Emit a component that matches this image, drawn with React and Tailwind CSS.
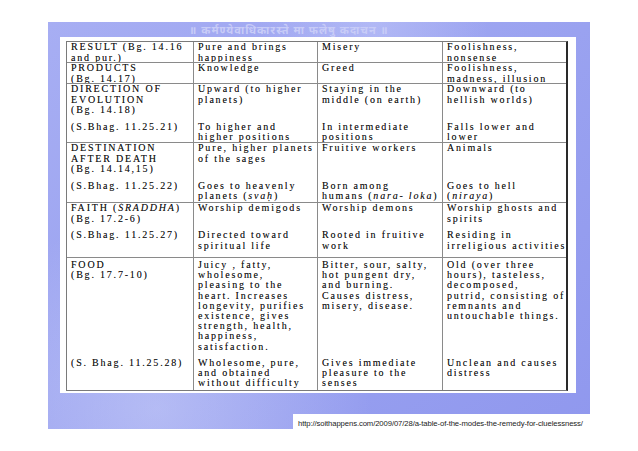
import React from 'react';

const I = ({ children }) => <span className="italic">{children}</span>;

const rows = [
  {
    h: 'h-[21px]',
    cells: [
      ['RESULT (Bg. 14.16', 'and pur.)'],
      ['Pure and brings', 'happiness'],
      ['Misery'],
      ['Foolishness,', 'nonsense'],
    ],
  },
  {
    h: 'h-[21px]',
    cells: [
      ['PRODUCTS', '(Bg. 14.17)'],
      ['Knowledge'],
      ['Greed'],
      ['Foolishness,', 'madness, illusion'],
    ],
  },
  {
    h: 'h-[59px]',
    cells: [
      ['DIRECTION OF', 'EVOLUTION', '(Bg. 14.18)', null, '(S.Bhag. 11.25.21)'],
      ['Upward (to higher', 'planets)', '', null, 'To higher and', 'higher positions'],
      ['Staying in the', 'middle (on earth)', '', null, 'In intermediate', 'positions'],
      ['Downward (to', 'hellish worlds)', '', null, 'Falls lower and', 'lower'],
    ],
  },
  {
    h: 'h-[60px]',
    cells: [
      ['DESTINATION', 'AFTER DEATH', '(Bg. 14.14,15)', null, '(S.Bhag. 11.25.22)'],
      ['Pure, higher planets', 'of the sages', '', null, 'Goes to heavenly', <>planets (<I>svaḥ</I>)</>],
      ['Fruitive workers', '', '', null, 'Born among', <>humans (<I>nara- loka</I>)</>],
      ['Animals', '', '', null, 'Goes to hell', <>(<I>niraya</I>)</>],
    ],
  },
  {
    h: 'h-[55px]',
    cells: [
      [<>FAITH (<I>ŚRADDHĀ</I>)</>, '(Bg. 17.2-6)', null, '(S.Bhag. 11.25.27)'],
      ['Worship demigods', '', null, 'Directed toward', 'spiritual life'],
      ['Worship demons', '', null, 'Rooted in fruitive', 'work'],
      ['Worship ghosts and', 'spirits', null, 'Residing in', 'irreligious activities'],
    ],
  },
  {
    h: 'h-[132px]',
    food: true,
    cells: [
      ['FOOD', '(Bg. 17.7-10)', '', '', '', '', '', '', '', null, '(S. Bhag. 11.25.28)'],
      [
        'Juicy , fatty,',
        'wholesome,',
        'pleasing to the',
        'heart. Increases',
        'longevity, purifies',
        'existence, gives',
        'strength, health,',
        'happiness,',
        'satisfaction.',
        null,
        'Wholesome, pure,',
        'and obtained',
        'without difficulty',
      ],
      [
        'Bitter, sour, salty,',
        'hot pungent dry,',
        'and burning.',
        'Causes distress,',
        'misery, disease.',
        '',
        '',
        '',
        '',
        null,
        'Gives immediate',
        'pleasure to the',
        'senses',
      ],
      [
        'Old (over three',
        'hours), tasteless,',
        'decomposed,',
        'putrid, consisting of',
        'remnants and',
        'untouchable things.',
        '',
        '',
        '',
        null,
        'Unclean and causes',
        'distress',
      ],
    ],
  },
];

const Cell = ({ lines, last, food }) => (
  <div className={`pl-[4px] overflow-hidden ${food ? 'pt-[2px]' : ''} ${last ? '' : 'border-r border-[#8a8a8a]'}`}>
    {lines.map((l, i) =>
      l === null ? (
        <div key={i} className="h-[6px]" />
      ) : (
        <div
          key={i}
          className={`whitespace-nowrap ${food ? 'h-[10.2px] leading-[10.2px]' : 'h-[10.5px] leading-[10.5px]'}`}
        >
          {l}
        </div>
      )
    )}
  </div>
);

export default function App() {
  return (
    <div className="w-[638px] h-[451px] bg-white relative overflow-hidden">
      <div className="ml-[48px] mt-[22px] w-[542px] h-[407px] bg-gradient-to-br from-[#a7aef3] via-[#9aa2f0] to-[#9098ee] relative">
        <div className="absolute inset-0 bg-[radial-gradient(ellipse_at_20%_95%,rgba(215,220,250,0.45),transparent_35%)]" />
        <div className="absolute inset-0 bg-[radial-gradient(ellipse_at_60%_0%,rgba(200,206,250,0.45),transparent_25%)]" />
        <div className="relative h-[15px] flex items-center justify-center pr-[60px]">
          <span className="text-[11px] leading-none text-[#c8ccf7] font-bold tracking-[1px] font-['Noto_Sans','DejaVu_Sans',sans-serif]">
            ॥ कर्मण्येवाधिकारस्ते मा फलेषु कदाचन ॥
          </span>
        </div>
        <div className="relative ml-[12px] w-[516px] h-[356px] bg-white pt-[4px] pl-[6px]">
          <div className="w-[502px] border-t border-l border-b border-[#7a7a7a] border-r-2 border-r-[#2a2a2a] text-[10px] text-[#151515] tracking-[1.8px] [text-shadow:0_0_0.4px_rgba(0,0,0,0.45)] font-['Liberation_Serif','Times_New_Roman',serif]">
            {rows.map((r, ri) => (
              <div
                key={ri}
                className={`grid grid-cols-[127px_124px_125px_124px] ${r.h} ${ri < rows.length - 1 ? 'border-b border-[#8a8a8a]' : ''}`}
              >
                {r.cells.map((c, ci) => (
                  <Cell key={ci} lines={c} last={ci === 3} food={r.food} />
                ))}
              </div>
            ))}
          </div>
        </div>
      </div>
      <div className="absolute left-[293px] top-[414px] w-[297px] h-[19px] bg-white flex items-center pl-[5px]">
        <span className="text-[7.7px] text-[#222] tracking-[-0.1px] whitespace-nowrap font-['Liberation_Sans',Arial,sans-serif]">
          http://soithappens.com/2009/07/28/a-table-of-the-modes-the-remedy-for-cluelessness/
        </span>
      </div>
    </div>
  );
}
